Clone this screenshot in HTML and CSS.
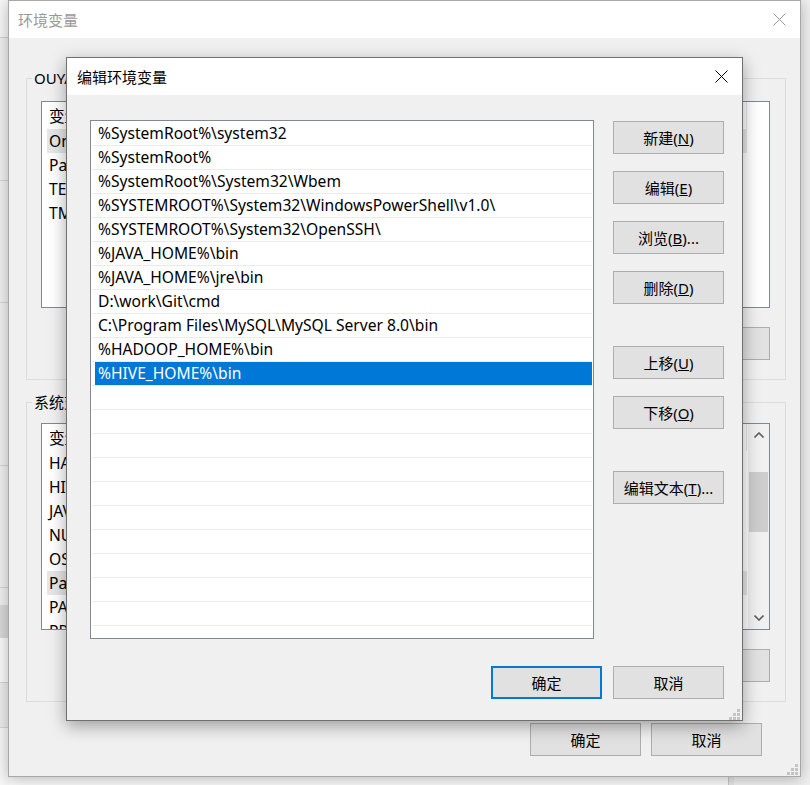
FILE: index.html
```html
<!DOCTYPE html>
<html lang="zh-CN">
<head>
    <meta charset="UTF-8">
    <meta name="viewport" content="width=device-width, initial-scale=1.0">
    <title>编辑环境变量</title>
    <link rel="stylesheet" href="styles.css">
</head>
<body>
<div class="desktop">
    <div class="back-window left"></div>
    <div class="back-window right"></div>

    <!-- 环境变量 window, inactive, behind the edit dialog -->
    <div class="window env">
        <div class="titlebar">
            <span class="title">环境变量</span>
            <svg class="close" width="13" height="13" viewBox="0 0 13 13"><path d="M0.5 0.5L12.5 12.5M12.5 0.5L0.5 12.5"/></svg>
        </div>
        <div class="env-body">
            <fieldset class="group user">
                <legend>OUYANG 的用户变量(<u>U</u>)</legend>
                <div class="listview">
                    <div class="lv-head"><span class="col-name">变量</span><span>值</span></div>
                    <div class="lv-row hot"><span class="col-name">OneDrive</span><span>C:\Users\OUYANG\OneDrive</span></div>
                    <div class="lv-row"><span class="col-name">Path</span><span>C:\Users\OUYANG\AppData\Local\Microsoft\WindowsApps;</span></div>
                    <div class="lv-row"><span class="col-name">TEMP</span><span>%USERPROFILE%\AppData\Local\Temp</span></div>
                    <div class="lv-row"><span class="col-name">TMP</span><span>%USERPROFILE%\AppData\Local\Temp</span></div>
                </div>
                <div class="group-buttons">
                    <button class="btn">新建(<u>N</u>)...</button>
                    <button class="btn">编辑(<u>E</u>)...</button>
                    <button class="btn">删除(<u>D</u>)</button>
                </div>
            </fieldset>

            <fieldset class="group system">
                <legend>系统变量(<u>S</u>)</legend>
                <div class="listview">
                    <div class="lv-content">
                        <div class="lv-head"><span class="col-name">变量</span><span>值</span></div>
                        <div class="lv-row"><span class="col-name">HADOOP_HOME</span><span>D:\work\hadoop-2.7.2</span></div>
                        <div class="lv-row"><span class="col-name">HIVE_HOME</span><span>D:\work\apache-hive-2.3.6-bin</span></div>
                        <div class="lv-row"><span class="col-name">JAVA_HOME</span><span>C:\Program Files\Java\jdk1.8.0_181</span></div>
                        <div class="lv-row"><span class="col-name">NUMBER_OF_PROCESSORS</span><span>8</span></div>
                        <div class="lv-row"><span class="col-name">OS</span><span>Windows_NT</span></div>
                        <div class="lv-row hot"><span class="col-name">Path</span><span>C:\ProgramData\Oracle\Java\javapath;</span></div>
                        <div class="lv-row"><span class="col-name">PATHEXT</span><span>.COM;.EXE;.BAT;.CMD;.VBS;.VBE;.JS</span></div>
                        <div class="lv-row"><span class="col-name">PROCESSOR_ARCHITECTURE</span><span>AMD64</span></div>
                    </div>
                    <div class="scrollbar">
                        <div class="sb-arrow"><svg width="10" height="6" viewBox="0 0 10 6"><path d="M0.5 5.5L5 1L9.5 5.5"/></svg></div>
                        <div class="sb-track"><div class="sb-thumb"></div></div>
                        <div class="sb-arrow"><svg width="10" height="6" viewBox="0 0 10 6"><path d="M0.5 0.5L5 5L9.5 0.5"/></svg></div>
                    </div>
                </div>
                <div class="group-buttons">
                    <button class="btn">新建(<u>W</u>)...</button>
                    <button class="btn">编辑(<u>I</u>)...</button>
                    <button class="btn">删除(<u>L</u>)</button>
                </div>
            </fieldset>

            <div class="dialog-buttons">
                <button class="btn">确定</button>
                <button class="btn">取消</button>
            </div>
        </div>
        <svg class="grip" width="11" height="11" viewBox="0 0 11 11"><path d="M8 0h3v3H8zM4 4h3v3H4zM8 4h3v3H8zM0 8h3v3H0zM4 8h3v3H4zM8 8h3v3H8z"/></svg>
    </div>

    <!-- 编辑环境变量 dialog, active -->
    <div class="window edit">
        <div class="titlebar">
            <span class="title">编辑环境变量</span>
            <svg class="close" width="13" height="13" viewBox="0 0 13 13"><path d="M0.5 0.5L12.5 12.5M12.5 0.5L0.5 12.5"/></svg>
        </div>
        <div class="edit-body">
            <div class="path-list">
                <div class="path-row">%SystemRoot%\system32</div>
                <div class="path-row">%SystemRoot%</div>
                <div class="path-row">%SystemRoot%\System32\Wbem</div>
                <div class="path-row">%SYSTEMROOT%\System32\WindowsPowerShell\v1.0\</div>
                <div class="path-row">%SYSTEMROOT%\System32\OpenSSH\</div>
                <div class="path-row">%JAVA_HOME%\bin</div>
                <div class="path-row">%JAVA_HOME%\jre\bin</div>
                <div class="path-row">D:\work\Git\cmd</div>
                <div class="path-row">C:\Program Files\MySQL\MySQL Server 8.0\bin</div>
                <div class="path-row">%HADOOP_HOME%\bin</div>
                <div class="path-row selected">%HIVE_HOME%\bin</div>
                <div class="path-row"></div>
                <div class="path-row"></div>
                <div class="path-row"></div>
                <div class="path-row"></div>
                <div class="path-row"></div>
                <div class="path-row"></div>
                <div class="path-row"></div>
                <div class="path-row"></div>
                <div class="path-row"></div>
                <div class="path-row"></div>
                <div class="path-row"></div>
            </div>

            <div class="side-buttons">
                <button class="btn">新建(<u>N</u>)</button>
                <button class="btn">编辑(<u>E</u>)</button>
                <button class="btn">浏览(<u>B</u>)...</button>
                <button class="btn">删除(<u>D</u>)</button>
                <button class="btn gap">上移(<u>U</u>)</button>
                <button class="btn">下移(<u>O</u>)</button>
                <button class="btn gap">编辑文本(<u>T</u>)...</button>
            </div>

            <div class="bottom-buttons">
                <button class="btn default">确定</button>
                <button class="btn">取消</button>
            </div>
        </div>
        <svg class="grip" width="11" height="11" viewBox="0 0 11 11"><path d="M8 0h3v3H8zM4 4h3v3H4zM8 4h3v3H8zM0 8h3v3H0zM4 8h3v3H4zM8 8h3v3H8z"/></svg>
    </div>
</div>
</body>
</html>
```

FILE: styles.css
```css
* {
    box-sizing: border-box;
}
body {
    margin: 0;
    width: 810px;
    height: 785px;
    overflow: hidden;
    background-color: #fbfbfb;
    font-family: "Noto Sans", "Noto Sans CJK SC", sans-serif;
    font-size: 15px;
    color: #000;
}
.desktop {
    position: relative;
    width: 810px;
    height: 785px;
    overflow: hidden;
}

/* windows peeking out behind */
.back-window {
    position: absolute;
    top: 0;
    height: 785px;
    background-color: #f0f0f0;
}
.back-window.left {
    left: -100px;
    width: 110px;
    background: linear-gradient(to bottom,
        #f7f7f7 0 37px, #cfcfcf 37px 38px,
        #f0f0f0 38px 180px, #d4d4d4 180px 181px,
        #f0f0f0 181px 302px, #d4d4d4 302px 303px,
        #f0f0f0 303px 465px, #d4d4d4 465px 466px,
        #f0f0f0 466px 587px, #d4d4d4 587px 588px,
        #f0f0f0 588px 605px, #d9d9d9 605px 638px,
        #fafafa 638px 682px, #d4d4d4 682px 683px,
        #ececec 683px 727px, #d4d4d4 727px 728px,
        #f7f7f7 728px);
}
.back-window.right {
    left: 728px;
    width: 100px;
    border-left: 1px solid #c8c8c8;
    box-shadow: inset 5px 0 0 #e6e6e6;
}

.window {
    position: absolute;
    display: flex;
    flex-direction: column;
    background-color: #f0f0f0;
}
.window.env {
    left: 8px;
    top: 0;
    width: 793px;
    height: 777px;
    border: 1px solid #a8a8a8;
    box-shadow: 0 2px 14px rgba(0, 0, 0, 0.28);
}
.window.edit {
    left: 66px;
    top: 57px;
    width: 677px;
    height: 664px;
    border: 1px solid #707070;
    box-shadow: 0 5px 16px rgba(0, 0, 0, 0.35);
}

.titlebar {
    flex: none;
    height: 37px;
    background-color: #fff;
    display: flex;
    align-items: center;
    justify-content: space-between;
    padding: 0 14px 0 9px;
}
.edit .titlebar {
    padding-left: 10px;
}
.env .title {
    color: #9a9a9a;
}
.close path {
    fill: none;
    stroke: #000;
    stroke-width: 1;
}
.env .close path {
    stroke: #9a9a9a;
}

.grip {
    position: absolute;
    right: 2px;
    bottom: 1px;
}
.edit .grip {
    bottom: 0;
}
.grip path {
    fill: #c4c4c4;
}

.btn {
    width: 111px;
    height: 33px;
    padding: 0;
    background-color: #e1e1e1;
    border: 1px solid #adadad;
    font: inherit;
    color: #000;
}
.btn.default {
    border: 2px solid #0078d7;
}

/* 环境变量 body */
.env-body {
    display: flex;
    flex-direction: column;
    padding: 30px 14px 0 17px;
}
.group {
    margin: 0;
    min-width: 0;
    padding: 0 15px 19px 14px;
    border: 1px solid #dcdcdc;
}
.group legend {
    margin-left: -9px;
    padding: 0 2px;
    line-height: 20px;
}
.group.system {
    margin-top: 12px;
}
.listview {
    margin-top: 13px;
    height: 207px;
    border: 1px solid #828790;
    background-color: #fff;
    overflow: hidden;
    font-size: 15.6px;
}
.system .listview {
    margin-top: 11px;
    display: flex;
}
.lv-content {
    flex: 1;
    overflow: hidden;
}
.lv-head {
    width: 705px;
    height: 27px;
    display: flex;
    align-items: center;
    padding-left: 7px;
    border-right: 1px solid #e5e5e5;
    white-space: nowrap;
}
.lv-row {
    width: 700px;
    height: 24px;
    margin-left: 5px;
    padding-left: 2px;
    display: flex;
    align-items: center;
    white-space: nowrap;
}
.lv-row.hot {
    background-color: #e6e6e6;
}
.col-name {
    width: 230px;
    flex: none;
}
.scrollbar {
    flex: none;
    width: 21px;
    display: flex;
    flex-direction: column;
    background-color: #f0f0f0;
}
.sb-arrow {
    height: 22px;
    display: flex;
    align-items: center;
    justify-content: center;
}
.sb-arrow path {
    fill: none;
    stroke: #606060;
    stroke-width: 1.6;
}
.sb-track {
    flex: 1;
    padding: 26px 1px 0;
}
.sb-thumb {
    height: 60px;
    background-color: #cdcdcd;
}
.group-buttons {
    display: flex;
    justify-content: flex-end;
    gap: 11px;
    margin-top: 19px;
}
.dialog-buttons {
    display: flex;
    justify-content: flex-end;
    gap: 10px;
    margin-top: 21px;
    padding-right: 24px;
}

/* 编辑环境变量 body */
.edit-body {
    flex: 1;
    display: grid;
    grid-template-columns: 504px 111px;
    grid-template-rows: 519px 33px;
    column-gap: 19px;
    row-gap: 27px;
    padding: 25px 18px 20px 23px;
}
.path-list {
    border: 1px solid #828790;
    background-color: #fff;
    padding-top: 1px;
    overflow: hidden;
    font-size: 15.6px;
}
.path-row {
    height: 24px;
    margin: 0 1px;
    padding-left: 6px;
    border-bottom: 1px solid #ebebeb;
    line-height: 23px;
    white-space: nowrap;
}
.path-row.selected {
    background: linear-gradient(to right, #fff 3px, #0078d7 3px);
    color: #fff;
}
.side-buttons {
    display: flex;
    flex-direction: column;
    gap: 17px;
    padding-top: 1px;
}
.side-buttons .gap {
    margin-top: 25px;
}
.bottom-buttons {
    grid-column: 1 / -1;
    display: flex;
    justify-content: flex-end;
    gap: 11px;
}
```
